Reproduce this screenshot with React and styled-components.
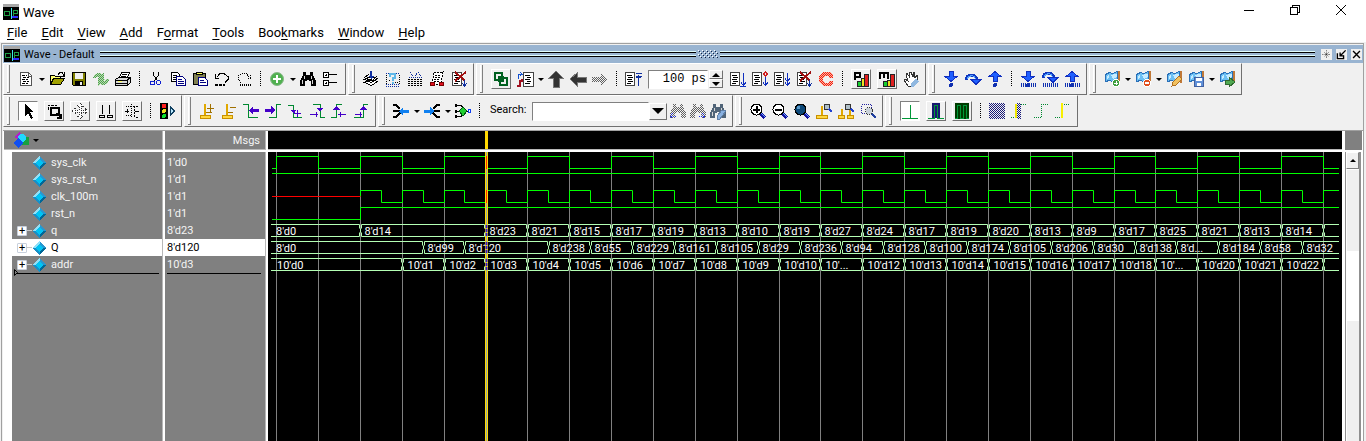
import React, { useState } from "react";
import styled, { createGlobalStyle } from "styled-components";

const GlobalStyle = createGlobalStyle`
  *, *::before, *::after {
    box-sizing: border-box;
  }
  body {
    margin: 0;
    background: #f0f0f0;
    color: #000;
    font-family: Roboto, "Liberation Sans", sans-serif;
    font-size: 11px;
  }
  button, input {
    font: inherit;
    color: inherit;
  }
`;

const MENU = [
  ["", "F", "ile"],
  ["", "E", "dit"],
  ["", "V", "iew"],
  ["", "A", "dd"],
  ["F", "o", "rmat"],
  ["", "T", "ools"],
  ["Boo", "k", "marks"],
  ["", "W", "indow"],
  ["", "H", "elp"],
];

const SIGNALS = [
  { name: "sys_clk", value: "1'd0" },
  { name: "sys_rst_n", value: "1'd1" },
  { name: "clk_100m", value: "1'd1" },
  { name: "rst_n", value: "1'd1" },
  { name: "q", value: "8'd23", bus: true },
  { name: "Q", value: "8'd120", bus: true },
  { name: "addr", value: "10'd3", bus: true },
];

// bus values as [clock edge, value]
const Q_LOW = [
  [0, "8'd0"], [2, "8'd14"], [5, "8'd23"], [6, "8'd21"], [7, "8'd15"],
  [8, "8'd17"], [9, "8'd19"], [10, "8'd13"], [11, "8'd10"], [12, "8'd19"],
  [13, "8'd27"], [14, "8'd24"], [15, "8'd17"], [16, "8'd19"], [17, "8'd20"],
  [18, "8'd13"], [19, "8'd9"], [20, "8'd17"], [21, "8'd25"], [22, "8'd21"],
  [23, "8'd13"], [24, "8'd14"], [25, ""],
];

const Q_HIGH = [
  [0, "8'd0"], [3.5, "8'd99"], [4.5, "8'd120"], [6.5, "8'd238"], [7.5, "8'd55"],
  [8.5, "8'd229"], [9.5, "8'd161"], [10.5, "8'd105"], [11.5, "8'd29"],
  [12.5, "8'd236"], [13.5, "8'd94"], [14.5, "8'd128"], [15.5, "8'd100"],
  [16.5, "8'd174"], [17.5, "8'd105"], [18.5, "8'd206"], [19.5, "8'd30"],
  [20.5, "8'd138"], [21.5, "8'd..."], [22.5, "8'd184"], [23.5, "8'd58"],
  [24.5, "8'd32"],
];

const ADDR = [[0, "10'd0"]];
for (let k = 3; k <= 24; k++) {
  ADDR.push([k, k === 13 || k === 21 ? "10'..." : `10'd${k - 2}`]);
}
ADDR.push([25, ""]);

/* ---------- icons ---------- */

const L = ({ d, c = "#000", w = 1, dash, fill = "none" }) => (
  <path d={d} stroke={c} strokeWidth={w} strokeDasharray={dash} fill={fill} />
);

const Page = ({ x = 1 }) => (
  <>
    <path d={`M${x + 0.5} 1.5h9v13h-9z`} fill="#fff" stroke="#444" />
    <L d={`M${x + 2} 4.5h5M${x + 3} 6.5h5M${x + 2} 8.5h5M${x + 3} 10.5h5M${x + 2} 12.5h4`} />
  </>
);

const Lens = ({ fill = "#fff", sign }) => (
  <>
    <path d="M10 10l5 5" stroke="#1414a0" strokeWidth="3" />
    <path d="M11 10l4 4" stroke="#6aa0ff" />
    <circle cx="6.5" cy="6.5" r="5.5" fill={fill} stroke="#000" />
    {sign}
  </>
);

const Bino = ({ dash, c = "#000" }) => (
  <>
    <path d="M3 1h3v3h4V1h3v3l3 6v5h-5v-5H9V9H7v1H5v5H0v-5l3-6z" fill={dash ? "url(#dither)" : c} />
    {!dash && <L d="M4.500 5v3M2.500 9v4M11.500 5v3M12.500 9v4" c="#d8d8d8" />}
  </>
);

const Flag = () => (
  <>
    <path d="M1.500 3.500l4-2 3 1 5-2v8l-5 2-3-1-4 1z" fill="#6cc0f4" stroke="#2a70b8" />
    <path d="M7 4l3-1 3 0v3l-4 2zM3 5l2-1v3l-2 1z" fill="#c8ecff" />
    <path d="M14.500 0v12" stroke="#c07838" strokeWidth="2" />
  </>
);

const Down = ({ c = "#2060ff" }) => <path d="M6 .5h4v5h4l-6 5-6-5h4z" fill={c} stroke="#1030c0" />;
const Up = ({ c = "#2060ff" }) => <path d="M6 10.500h4v-5h4l-6-5-6 5h4z" fill={c} stroke="#1030c0" />;
const Over = () => (
  <>
    <path d="M1 7c1-6 9-7 11 0" fill="none" stroke="#1038c0" strokeWidth="3" />
    <path d="M2 6c2-4 7-5 9 1" fill="none" stroke="#50a0ff" />
    <path d="M6 6.500h10l-5 5z" fill="#2060ff" stroke="#1030c0" />
  </>
);
const Ticks = () => <L d="M1 14h15" c="#1030b0" w="4" dash="1 1" />;

const GREEN = "#008830";
const PURPLE = "#4400c8";
const GOLD = "#c89000";

const icons = {
  app: (
    <>
      <path d="M0 0h16v16H0z" fill="#000" />
      <path d="M0 0h16v3H0z" fill="#a8a8a8" />
      <L d="M1 7.500h5v4H2M1 7.500v4" c="#20a048" />
      <L d="M10.500 12V6.500h4v3h-4" c="#20a048" />
      <L d="M8 4v11" c="#40e8e8" />
      <L d="M9 13h6" c="#3030ff" w="2" />
    </>
  ),
  newDoc: (
    <>
      <path d="M2.5 1.5h8l3 3v10h-11z" fill="#fff" stroke="#555" />
      <L d="M10.5 1v4h3" c="#555" />
      <L d="M4 4.5h5M5 6.5h6M4 8.5h6M5 10.5h6M4 12.5h6" dash="3 1" />
    </>
  ),
  open: (
    <>
      <path d="M1.5 13.5v-9h4l1 1h5v3" fill="#ffff70" stroke="#000" />
      <path d="M1.5 13.5l3-6h11l-4 6z" fill="#a0a000" stroke="#000" />
      <L d="M9 3.5l2-2h2l2 3M15 1v4h-3" />
    </>
  ),
  save: (
    <>
      <path d="M1.5 1.5h13v13h-12l-1-1z" fill="#808000" stroke="#000" />
      <path d="M4 2h8v6H4z" fill="#f0f0f0" />
      <path d="M4 10h8v5H4z" fill="#000" />
      <path d="M9 11h2v3H9z" fill="#f0f0f0" />
    </>
  ),
  reload: (
    <>
      <path d="M0 7c1-5 6-6 9-4l2-2v7H4l2-2c-2-1-3 0-3 1z" fill="#b8dcb0" />
      <path d="M16 8c-1 6-6 7-9 5l-2 2V8h7l-2 2c2 0 3-1 3-2z" fill="#b8dcb0" />
      <path d="M0 7c1-5 6-6 9-4l2-2v7H4l2-2c-2-1-3 0-3 1z" fill="url(#ditherGreen)" />
      <path d="M16 8c-1 6-6 7-9 5l-2 2V8h7l-2 2c2 0 3-1 3-2z" fill="url(#ditherGreen)" />
    </>
  ),
  print: (
    <>
      <path d="M4.5 6.5l2-5h8l-2 5z" fill="#fff" stroke="#000" />
      <path d="M.5 8.5l3-2h12v5l-3 3H.5z" fill="#d8d8d8" stroke="#000" />
      <L d="M7 3.5h5M6 5.5h5M1 9.5h11l3-3M12.5 10v4M1 12h11" />
      <path d="M3 10h4v1H3z" fill="#ffff60" />
    </>
  ),
  cut: (
    <>
      <L d="M5.5 1v3l4 6M10.5 1v3l-4 6" w="1" />
      <circle cx="4.5" cy="12" r="2" fill="none" stroke="#1020d0" />
      <circle cx="10.5" cy="11.5" r="2" fill="none" stroke="#1020d0" />
    </>
  ),
  copy: (
    <>
      <path d="M1.5 1.5h6l2 2v7h-8z" fill="#fff" stroke="#000" />
      <L d="M3 4.5h4M3 6.5h5M3 8.5h5" />
      <path d="M6.5 5.5h6l3 3v6h-9z" fill="#fff" stroke="#000080" />
      <L d="M8 8.5h4M8 10.5h6M8 12.5h6" c="#000080" />
    </>
  ),
  paste: (
    <>
      <path d="M1.5 2.5h12v11h-12z" fill="#808050" stroke="#000" />
      <path d="M4.5 3.5v-2h6v2z" fill="#ffff50" stroke="#000" />
      <path d="M6.5 6.5h6l3 3v5h-9z" fill="#fff" stroke="#000080" />
      <L d="M8 9.5h4M8 11.5h6" c="#000080" />
    </>
  ),
  undo: (
    <>
      <L d="M1.5 7V3M1 7.5h4M3 6l3-3.500h4l4 3v3l-3 3" />
      <L d="M1 14h10" dash="3 1" w="2" />
    </>
  ),
  redo: (
    <>
      <L d="M14.500 7V3M15 7.500h-4M13 6l-3-3.500H6l-4 3v3l3 3" dash="1 1" />
      <L d="M4 13.500h11" dash="1 1" w="2" />
    </>
  ),
  add: (
    <>
      <circle cx="8" cy="8" r="6.5" fill="#50b050" stroke="#88b888" shapeRendering="auto" />
      <L d="M8 4v8M4 8h8" c="#fff" w="2" />
    </>
  ),
  find: <Bino />,
  tree: (
    <>
      <path d="M1.500 1.500h5v5h-5zM1.500 9.500h5v5h-5z" fill="#fff" stroke="#000" />
      <L d="M3 4h2M4 3v2M3 12h2M4 11v2M7 3.500h8M7 11.500h8" />
    </>
  ),
  book: (
    <>
      <path d="M1.500 11.500l6-3 7 2-6 4zM1.500 8.500l6-3 7 2-6 4z" fill="#fff" stroke="#000" />
      <L d="M1 6.500l5-3M14 5l-5 5-7-3" />
      <path d="M7 0h2v5h2L8 8 5 5h2z" fill="#1030a0" />
    </>
  ),
  help: (
    <>
      <L d="M1 2.500h14M1 13.500h14M1 15.500h14" c="#1030a0" dash="1 1" />
      <L d="M1.500 4v10M14.500 4v10M4 9h2M10 11h3" dash="1 1" />
      <L d="M5 6V3h5v4H8v3M8 11v2" c="#60b8e8" w="2" />
    </>
  ),
  grid: (
    <>
      <L d="M1 8.500h15M1 10.500h15M1 12.500h15M1 14.500h15" dash="2 1" />
      <L d="M3 1l3 5M8 5l2-3M11 1l3 5M2 6h13" c="#1030a0" dash="1 1" />
    </>
  ),
  cart: (
    <>
      <path d="M5 2l9-1-2 12H3z" fill="#fff" stroke="#000" strokeDasharray="2 1" />
      <L d="M6 4h6M6 6h6M5 8h6M5 10h6" dash="2 1" />
      <circle cx="3.500" cy="13" r="2" fill="#e01020" stroke="#700" />
      <circle cx="12.500" cy="13" r="2" fill="#e01020" stroke="#700" />
    </>
  ),
  stopDoc: (
    <>
      <Page />
      <L d="M4 1l10 9M15 1L4 10" c="#a01010" w="2" />
      <L d="M13.500 9v6M11 12l2.500 3 2.500-3" c="#1030a0" />
    </>
  ),
  link: (
    <>
      <path d="M2 2h7v7H2zM7 7h7v7H7z" fill="none" stroke="#006020" strokeWidth="2" />
      <path d="M5 5h5v5H5z" fill="none" stroke="#006020" />
    </>
  ),
  restart: (
    <>
      <L d="M0 15h3v-5h2V8" c="#a01020" w="2" />
      <L d="M1.500 8V3h4M3 1l2 2-2 2" c="#1050d0" w="1" />
      <path d="M6.500 1.500h10v14h-10z" fill="#fff" stroke="#444" />
      <L d="M8 4.500h5M10 6.500h4M8 8.500h5M10 10.500h4M8 12.500h5" />
    </>
  ),
  upArrow: <path d="M8 0l7 7h-4v9H5V7H1z" fill="#333" stroke="#777" />,
  leftArrow: <path d="M0 8l7-6v4h9v5H7v4z" fill="#333" stroke="#777" />,
  rightArrow: <path d="M16 8L9 2v4H0v5h9v4z" fill="url(#dither)" />,
  runLength: (
    <>
      <Page x={0} />
      <L d="M11 2.500h6M11 5.500h6M13.500 4v11M11.500 7l2-2 2 2" c="#1030a0" />
    </>
  ),
  run: (
    <>
      <Page x={0} />
      <L d="M13.500 2v12M11 11.500l2.500 3 2.500-3M10 15.500h6" c="#1030c0" />
    </>
  ),
  runContinue: (
    <>
      <Page x={0} />
      <L d="M13.500 6v8M11 11.500l2.500 3 2.500-3" c="#1030c0" />
      <L d="M13.500 1l2 2-2 2-2-2z" c="#d02020" />
    </>
  ),
  runAll: (
    <>
      <Page x={0} />
      <L d="M13.500 2v12M11 7.500l2.500 3 2.500-3M11 11.500l2.500 3 2.500-3" c="#1030c0" />
    </>
  ),
  breakRun: (
    <>
      <path d="M5 1h7l3 3v3h-4V5H7L5 7v3l2 2h4v-2h4v2l-3 3H5l-4-4V5z" fill="#ffb0a0" />
      <path d="M5 1h7l3 3v3h-4V5H7L5 7v3l2 2h4v-2h4v2l-3 3H5l-4-4V5z" fill="url(#ditherRed)" />
    </>
  ),
  profile: (
    <>
      <path d="M4.500 10.500h4v5h-4z" fill="#18d030" stroke="#222" />
      <path d="M8.500 7.500h3v8h-3z" fill="#f0e020" stroke="#222" />
      <path d="M11.500 3.500h4v12h-4z" fill="#e02020" stroke="#222" />
      <L d="M2 9V2h5v4H2" w="2" />
    </>
  ),
  memory: (
    <>
      <path d="M4.500 10.500h4v5h-4z" fill="#18d030" stroke="#222" />
      <path d="M8.500 9.500h3v6h-3z" fill="#f0e020" stroke="#222" />
      <path d="M11.500 3.500h4v12h-4z" fill="#e02020" stroke="#222" />
      <L d="M1 8V2h8v6M5 2v5" w="2" />
    </>
  ),
  hand: (
    <>
      <path
        d="M5 15l-4-6 1-1 3 2-2-7 1-1 3 5-1-6h2l2 5V1h1l1 6 2-3 1 1-1 6-3 4z"
        fill="#fff"
        stroke="#333"
      />
      <path d="M8 12l5-4 3 2-5 6H8z" fill="#90b8e0" />
    </>
  ),
  stepInto: (
    <>
      <Down />
      <circle cx="8" cy="14" r="2" fill="#1030b0" />
    </>
  ),
  stepOver: (
    <g transform="translate(0 2)">
      <Over />
    </g>
  ),
  stepOut: (
    <>
      <Up />
      <circle cx="8" cy="14" r="2" fill="#1030b0" />
    </>
  ),
  stepIntoCur: (
    <>
      <Ticks />
      <Down />
      <circle cx="8" cy="14" r="2" fill="#1030b0" />
    </>
  ),
  stepOverCur: (
    <>
      <Ticks />
      <Over />
    </>
  ),
  stepOutCur: (
    <>
      <Ticks />
      <Up />
      <circle cx="8" cy="14" r="2" fill="#1030b0" />
    </>
  ),
  flagAdd: (
    <>
      <Flag />
      <circle cx="12" cy="12" r="3.500" fill="#40a040" stroke="#fff" />
      <L d="M12 10v4M10 12h4" c="#fff" />
    </>
  ),
  flagRemove: (
    <>
      <Flag />
      <circle cx="12" cy="12" r="3.500" fill="#e05020" stroke="#fff" />
      <L d="M10 12h4" c="#fff" w="2" />
    </>
  ),
  flagEdit: (
    <>
      <Flag />
      <path d="M6 15l1-4 6-6 3 3-6 6z" fill="#f0c060" stroke="#b07020" />
    </>
  ),
  flagSave: (
    <>
      <Flag />
      <path d="M6.500 6.500h9v9h-9z" fill="#6090d8" stroke="#4060a0" />
      <path d="M8 7h6v3H8zM9 12h4v3H9z" fill="#fff" />
    </>
  ),
  flagGo: (
    <>
      <Flag />
      <path d="M6 9h4V6l6 5-6 5v-3H6z" fill="#50a850" stroke="#306830" />
    </>
  ),
  pointer: <path d="M5 1v12l3-3 3 6 2-1-3-6h4z" fill="#000" />,
  zoomMode: (
    <>
      <L d="M2 7V2h9" dash="3 1" />
      <path d="M5 5h8v7H5z" fill="none" stroke="#000" strokeWidth="2" />
      <L d="M11 10l4 5M15 11v4h-4" w="2" />
    </>
  ),
  pan: (
    <path
      d="M8 0l3 3H9v4h4V5l3 3-3 3V9H9v4h2l-3 3-3-3h2V9H3v2L0 8l3-3v2h4V3H5z"
      fill="#fff"
      stroke="#333"
      strokeDasharray="1 1"
    />
  ),
  measure: <L d="M4.500 2v9M11.500 2v9M1.500 12.500h5v2h-5zM9.500 12.500h5v2h-5z" />,
  edit: (
    <>
      <L d="M7.500 1v14M7 3.500h-5M2 12.500h5" dash="1 1" />
      <L d="M1 8h4M3 6v4M11 8h4" />
      <L d="M9 3.500h6M10.500 3v11h4" dash="2 1" />
    </>
  ),
  traffic: (
    <>
      <path d="M1 0h8v16H1z" fill="#000" />
      <circle cx="5" cy="3" r="2.500" fill="#ff2020" />
      <circle cx="5" cy="8" r="2" fill="#f0e020" />
      <circle cx="5" cy="13" r="2" fill="#10e030" />
      <L d="M11.500 4v8l4-4z" fill="#b8e8ff" c="#104060" />
    </>
  ),
  cursorAdd: (
    <>
      <path d="M1.500 12.500h10v3h-10z" fill="#ffd840" stroke={GOLD} />
      <L d="M6 1v11" c="#e0a800" w="2" />
      <L d="M11.500 1v8M8 5.500h7M7 9.500h6" c="#a07000" />
    </>
  ),
  cursorDel: (
    <>
      <path d="M1.500 12.500h10v3h-10z" fill="#ffd840" stroke={GOLD} />
      <L d="M6 1v11" c="#e0a800" w="2" />
      <L d="M9 4.500h6M7 9.500h5" c="#a07000" />
    </>
  ),
  prevEdge: (
    <>
      <L d="M0 1.500h5v13h10" c={GREEN} />
      <path d="M6 7l4-4v3h6v3h-6v3z" fill={PURPLE} />
    </>
  ),
  nextEdge: (
    <>
      <L d="M4 14.500h7v-13h5" c={GREEN} />
      <path d="M10 7L6 3v3H0v3h6v3z" fill={PURPLE} />
    </>
  ),
  prevFall: (
    <>
      <L d="M1 2.500h5v12h9" c={GREEN} />
      <L d="M7 10.500h7M10 7v7" c={PURPLE} />
      <path d="M4 7h5l-2 4z" fill={PURPLE} />
    </>
  ),
  nextFall: (
    <>
      <L d="M4 1.500h7v13h5" c={GREEN} />
      <L d="M1 11.500h8M7 9v5" c={PURPLE} />
      <path d="M8 5h6l-3 4z" fill={PURPLE} />
    </>
  ),
  prevRise: (
    <>
      <L d="M0 14.500h5v-13h6" c={GREEN} />
      <L d="M7 11.500h8M9 9v5" c={PURPLE} />
      <path d="M2 7h7L5 3z" fill={PURPLE} />
    </>
  ),
  nextRise: (
    <>
      <L d="M1 14.500h9v-13h5" c={GREEN} />
      <L d="M2 11.500h7M7 9v5" c={PURPLE} />
      <path d="M7 7h7l-4-4z" fill={PURPLE} />
    </>
  ),
  merge: (
    <>
      <L d="M0 2h3l4 4M0 8h7M0 14h3l4-4" w="2" />
      <path d="M6 8l4-4v3h6v3h-6v3z" fill="#1080f0" />
    </>
  ),
  split: (
    <>
      <L d="M16 2h-3L9 6M16 8H9M16 14h-3l-4-4" w="2" />
      <path d="M10 8L6 4v3H0v3h6v3z" fill="#1080f0" />
    </>
  ),
  trace: (
    <>
      <L d="M1 2.500h5l4 4M1 8.500h4M1 13.500h5l3-4M10 8.500h3" w="1" />
      <L d="M0 2.500h2M0 8.500h2M0 13.500h2" w="3" />
      <path d="M8 4l4 4-4 5-4-5z" fill="#20d030" stroke="#005010" />
      <path d="M13.500 6.500h2v3h-2z" fill="#fff" stroke="#1040f0" />
    </>
  ),
  findPrev: (
    <>
      <Bino dash />
      <L d="M6 13.500H1M3 10l-3 3 3 3" c="#2030e0" dash="1 1" />
    </>
  ),
  findNext: (
    <>
      <Bino dash />
      <L d="M9 13.500h6M12 10l3 3-3 3" c="#2030e0" dash="1 1" />
    </>
  ),
  findOptions: (
    <>
      <Bino c="#506478" />
      <path d="M7 13l5-6 4 1-6 8-3 0z" fill="#88b0e0" stroke="#6080a8" />
    </>
  ),
  zoomIn: <Lens sign={<L d="M6.500 3v7M3 6.500h7" w="2" />} />,
  zoomOut: <Lens sign={<L d="M3 6.500h7" w="2" />} />,
  zoomFull: <Lens fill="#0c4878" sign={<path d="M3 3h3v3H3z" fill="#5898c8" />} />,
  zoomCursor: (
    <>
      <path d="M.5 12.500h11v3H.5z" fill="#ffd840" stroke={GOLD} />
      <L d="M6 3v9" c="#e0a800" w="2" />
      <circle cx="11" cy="4" r="3" fill="#b0c0c8" stroke="#333" />
      <L d="M13 6l3 3" c="#2040d0" w="2" />
    </>
  ),
  zoomCursors: (
    <>
      <path d="M.5 12.500h6v3h-6zM9.500 12.500h6v3h-6z" fill="#ffd840" stroke={GOLD} />
      <L d="M4 6v6M12 6v6" c="#e0a800" w="2" />
      <circle cx="10" cy="4" r="3" fill="#b0c0c8" stroke="#333" />
      <L d="M13 6l3 3" c="#2040d0" w="2" />
    </>
  ),
  zoomArea: (
    <>
      <L d="M1.500 1.500h10v9h-10z" c="#2020a0" dash="1 1" />
      <circle cx="9" cy="8" r="3.500" fill="#c8d0d8" stroke="#333" strokeDasharray="1 1" />
      <L d="M12 11l4 4" c="#2040a0" w="2" />
    </>
  ),
  levelOne: <L d="M0 15.500h16M8.500 2v13" c="#009838" />,
  levelTwo: (
    <>
      <path d="M4 0h8v15H4z" fill="#181870" />
      <L d="M0 15.500h6.500v-13h3v13H16" c="#009838" />
    </>
  ),
  levelThree: (
    <>
      <path d="M1 0h14v16H1z" fill="#003c00" />
      <L d="M1 15.500h2.500v-13h3v13h3v-13h3v13H15" c="#009838" />
    </>
  ),
  ditherWave: <path d="M0 0h16v16H0z" fill="url(#ditherBlue)" />,
  ditherEdge: (
    <>
      <path d="M6 0h4v16H6z" fill="url(#ditherBlue)" />
      <L d="M5 1v14" c="#f0e800" w="2" />
      <L d="M0 14.500h4M10 1.500h5" c={GREEN} dash="1 1" />
    </>
  ),
  dotEdge: <L d="M1 14.500h7.500v-13h7" c={GREEN} dash="1 1" />,
  yellowEdge: (
    <>
      <L d="M0 14.500h6M9 1.500h6" c={GREEN} dash="1 1" />
      <L d="M7 0v15" c="#f8f000" w="2" />
    </>
  ),
  objects: (
    <>
      <path d="M6 0l6 4-4 5-7-4z" fill="#b020c8" />
      <path d="M9 5h7v8H9z" fill="#18a040" />
      <circle cx="9" cy="6" r="4" fill="#20d8ff" />
      <path d="M5 6l5 5-5 5-5-5z" fill="#1050f0" />
    </>
  ),
  signal: (
    <>
      <path d="M7.500 1l-7 7h7z" fill="#90e0f8" />
      <path d="M7.500 1l7 7h-7z" fill="#2898d0" />
      <path d="M.5 8l7 7V8z" fill="#1890c8" />
      <path d="M14.500 8l-7 7V8z" fill="#006898" />
      <path d="M7.500 4l4 4-4 4-4-4z" fill="#00c4f4" />
    </>
  ),
  minimize: <L d="M3 8.500h10" />,
  restore: (
    <>
      <L d="M3.500 5.500h7v7h-7z" />
      <L d="M5.500 5V3.500h7v7H11" />
    </>
  ),
  close: <path d="M3 3l10 10M13 3L3 13" stroke="#000" shapeRendering="auto" />,
  dockMove: <L d="M8 2v12M2 8h12M5 5l6 6M11 5l-6 6" dash="1 1" />,
  dockOut: (
    <>
      <L d="M2 6v8h9V9" w="2" />
      <L d="M14 2L7 9M6 5v5h5" w="2" />
    </>
  ),
  dockClose: <L d="M3 3l10 10M13 3L3 13" w="2" />,
};

const Icon = ({ name }) => (
  <Glyph viewBox="0 0 16 16" aria-hidden="true">
    {icons[name]}
  </Glyph>
);

// checker fills used by the disabled icons
const Patterns = () => (
  <PatternDefs aria-hidden="true">
    {[
      ["dither", "#606060"],
      ["ditherGreen", "#50a050"],
      ["ditherRed", "#f02010"],
      ["ditherBlue", "#181878"],
    ].map(([id, color]) => (
      <pattern key={id} id={id} width="2" height="2" patternUnits="userSpaceOnUse">
        <path d="M0 0h1v1H0zM1 1h1v1H1z" fill={color} />
      </pattern>
    ))}
  </PatternDefs>
);

/* ---------- toolbars ---------- */

// "|" is a separator, "v" a caret, "+name" a raised button, "-name" a pressed one
const Tools = ({ items }) =>
  items.split(" ").map((item, i) => {
    if (item === "|") return <Separator key={i} />;
    if (item === "v") return <Caret key={i} aria-label="More" />;
    if (item[0] === "+" || item[0] === "-") {
      return (
        <FramedButton key={i} $pressed={item[0] === "-"} aria-label={item.slice(1)}>
          <Icon name={item.slice(1)} />
        </FramedButton>
      );
    }
    return (
      <ToolButton key={i} aria-label={item}>
        <Icon name={item} />
      </ToolButton>
    );
  });

/* ---------- waveform ---------- */

const edge = (k) => Math.round(8 + k * 41.88) + 0.5;
const END = 1071;

const clockPath = (high, low, from, step) => {
  let d = "";
  let up = true;
  for (let k = from; k <= 25; k += step) {
    d += up ? `V${high}` : `V${low}`;
    d += `H${k + step > 25 ? END : edge(k + step)}`;
    up = !up;
  }
  return d;
};

const Bus = ({ values, top }) => {
  const bottom = top + 12;
  const mid = top + 6;
  return (
    <g fill="none" stroke="#b4ffb4">
      {values.map(([k, text], i) => {
        const start = i === 0 ? 3 : edge(k) + 1;
        const end = i === values.length - 1 ? END : edge(values[i + 1][0]) - 1;
        const wide = text.startsWith("10");
        return (
          <g key={k}>
            <path d={`M${start} ${top}H${end}M${start} ${bottom}H${end}`} />
            {i > 0 && (
              <path
                d={`M${start} ${top}v4M${start} ${bottom}v-4M${start - 2} ${top}v4M${start - 2} ${bottom}v-4M${start - 1} ${mid - 2}v4`}
              />
            )}
            <WaveText x={i === 0 ? (wide ? 9 : 8) : start + (wide ? 4 : 3)} y={top + 10}>
              {text}
            </WaveText>
          </g>
        );
      })}
    </g>
  );
};

const Wave = () => (
  <WaveSvg role="img" aria-label="Waveform">
    {Array.from({ length: 26 }, (_, k) => (
      <line key={k} x1={edge(k)} x2={edge(k)} y1="0" y2="100%" stroke="#808080" />
    ))}
    <g fill="none" stroke="#00ff00">
      <path d={`M4 16.5H${edge(0)}${clockPath(4.5, 16.5, 0, 1)}`} />
      <path d={`M4 21.5H${END}`} />
      <path d={`M${edge(2)} 44.5${clockPath(38.5, 50.5, 2, 0.5)}`} />
      <path d={`M4 67.5H${edge(2)}V55.5H${END}`} />
      <path d={`M4 44.5H${edge(2)}`} stroke="#ff0000" />
    </g>
    <Bus values={Q_LOW} top={72.5} />
    <Bus values={Q_HIGH} top={89.5} />
    <Bus values={ADDR} top={106.5} />
    <rect x="217" y="0" width="3" height="100%" fill="#ffd800" />
    <line x1="218.5" x2="218.5" y1="0" y2="100%" stroke="#90a8a8" />
    <path d="M218.500 4v13M218.500 38v13" stroke="#ff3000" />
    <path
      d="M218.500 73v12M218.500 90v12M218.500 107v12"
      stroke="#3018c8"
      strokeWidth="2"
      strokeDasharray="3 1"
    />
  </WaveSvg>
);

export default function App() {
  const [step, setStep] = useState("100 ps");
  const [query, setQuery] = useState("");

  return (
    <Shell>
      <GlobalStyle />
      <Patterns />
      <TitleBar>
        <Icon name="app" />
        <Title>Wave</Title>
        <WindowButton aria-label="Minimize"><Icon name="minimize" /></WindowButton>
        <WindowButton aria-label="Restore"><Icon name="restore" /></WindowButton>
        <WindowButton aria-label="Close"><Icon name="close" /></WindowButton>
      </TitleBar>
      <MenuBar>
        {MENU.map(([before, key, after]) => (
          <MenuItem key={before + key + after}>
            {before}
            <u>{key}</u>
            {after}
          </MenuItem>
        ))}
      </MenuBar>

      <Frame>
        <PaneTitle>
          <Icon name="app" />
          <span>Wave - Default</span>
          <Rails />
          <Grip viewBox="0 0 20 8" aria-hidden="true">
            <path d="M0 .5h18M0 4.500h18M2 2.500h18M2 6.500h18" stroke="#fff" strokeDasharray="1 3" />
            <path d="M1 1.500h18M1 5.500h18M3 3.500h17M3 7.500h17" stroke="#102040" strokeDasharray="1 3" />
          </Grip>
          <Rails />
          <DockButton aria-label="Move"><Icon name="dockMove" /></DockButton>
          <DockButton aria-label="Undock"><Icon name="dockOut" /></DockButton>
          <DockButton aria-label="Close pane"><Icon name="dockClose" /></DockButton>
        </PaneTitle>

        <ToolRow>
          <ToolGroup $end={5}>
            <Tools items="newDoc v open save reload print | cut copy paste undo redo | add v find tree" />
          </ToolGroup>
          <ToolGroup>
            <Tools items="book help grid cart stopDoc" />
          </ToolGroup>
          <ToolGroup>
            <Tools items="+link restart v upArrow leftArrow rightArrow | runLength" />
            <StepInput
              aria-label="Run length"
              value={step}
              onChange={(e) => setStep(e.target.value)}
            />
            <Spinner>
              <SpinButton $up aria-label="Increase" />
              <SpinButton aria-label="Decrease" />
            </Spinner>
            <Tools items="run runContinue runAll stopDoc breakRun | +profile +memory hand" />
          </ToolGroup>
          <ToolGroup>
            <Tools items="stepInto stepOver stepOut | stepIntoCur stepOverCur stepOutCur" />
          </ToolGroup>
          <ToolGroup>
            <Tools items="flagAdd v flagRemove v flagEdit flagSave v flagGo" />
          </ToolGroup>
        </ToolRow>
        <ToolRow>
          <ToolGroup>
            <Tools items="-pointer +zoomMode +pan +measure +edit | traffic" />
          </ToolGroup>
          <ToolGroup>
            <Tools items="cursorAdd cursorDel prevEdge nextEdge prevFall nextFall prevRise nextRise" />
          </ToolGroup>
          <ToolGroup $end={5}>
            <Tools items="merge v split v trace |" />
            <SearchLabel htmlFor="search">Search:</SearchLabel>
            <SearchInput
              id="search"
              value={query}
              onChange={(e) => setQuery(e.target.value)}
            />
            <DropButton aria-label="Search history" />
            <Tools items="findPrev findNext findOptions" />
          </ToolGroup>
          <ToolGroup>
            <Tools items="zoomIn zoomOut zoomFull zoomCursor zoomCursors zoomArea" />
          </ToolGroup>
          <ToolGroup>
            <Tools items="-levelOne +levelTwo +levelThree | ditherWave ditherEdge dotEdge yellowEdge" />
          </ToolGroup>
        </ToolRow>

        <Panes>
          <Column $width={159}>
            <ColumnHead>
              <Icon name="objects" />
              <Caret aria-label="Columns" />
            </ColumnHead>
            <ColumnBody $indent>
              {SIGNALS.map((s) => (
                <Row key={s.name} $selected={s.name === "Q"}>
                  {s.bus ? <Expander aria-label={`Expand ${s.name}`}>+</Expander> : <Leaf />}
                  <Icon name="signal" />
                  <RowName>{s.name}</RowName>
                </Row>
              ))}
              <InsertLine viewBox="0 0 147 8" aria-hidden="true">
                <path d="M2.500 .5l3 3-3 3zM5 4.500h142" fill="none" stroke="#000" />
              </InsertLine>
            </ColumnBody>
          </Column>
          <Column $width={101}>
            <ColumnHead $right>Msgs</ColumnHead>
            <ColumnBody>
              {SIGNALS.map((s) => (
                <Row key={s.name} $selected={s.name === "Q"}>
                  <RowValue>{s.value}</RowValue>
                </Row>
              ))}
              <InsertRule />
            </ColumnBody>
          </Column>
          <WaveColumn>
            <TimeHead>
              <CursorMark />
            </TimeHead>
            <Wave />
          </WaveColumn>
          <ScrollColumn>
            <ScrollHead />
            <Track>
              <ScrollButton aria-label="Scroll up" />
              <Thumb />
              <TrackGap />
              <TrackRest />
            </Track>
          </ScrollColumn>
        </Panes>
      </Frame>
    </Shell>
  );
}

const Glyph = styled.svg`
  display: block;
  flex: none;
  width: 16px;
  height: 16px;
  overflow: visible;
  shape-rendering: crispEdges;
`;

const PatternDefs = styled.svg`
  position: absolute;
  width: 0;
  height: 0;
`;

const Shell = styled.div`
  display: flex;
  flex-direction: column;
  min-height: 100vh;
  overflow: hidden;
`;

const TitleBar = styled.header`
  display: flex;
  align-items: center;
  height: 24px;
  padding: 0 2px 0 3px;
  background: #fff;
`;

const Title = styled.h1`
  flex: 1;
  margin: 0 0 0 4px;
  font-size: 13px;
  font-weight: 400;
`;

const WindowButton = styled.button`
  display: flex;
  align-items: center;
  justify-content: center;
  width: 46px;
  height: 20px;
  margin-bottom: 4px;
  padding: 0;
  border: 0;
  background: none;
`;

const MenuBar = styled.nav`
  display: flex;
  gap: 14px;
  height: 18px;
  padding: 0 7px;
  background: #fff;
`;

const MenuItem = styled.button`
  padding: 0;
  border: 0;
  background: none;
  font-size: 13px;
  line-height: 18px;

  u {
    text-underline-offset: 2px;
  }
`;

const Frame = styled.main`
  display: flex;
  flex: 1;
  flex-direction: column;
  margin: 1px 2px 0 1px;
  padding: 1px 0 0 1px;
  border: solid #a0a0a0;
  border-width: 1px 1px 0;
  background: #f0f0f0;
`;

const PaneTitle = styled.div`
  display: flex;
  align-items: center;
  gap: 4px;
  height: 18px;
  padding: 0 1px;
  background: #99b4d1;
`;

const Rails = styled.div`
  flex: 1;
  height: 6px;
  margin: 0 2px;
  background: linear-gradient(
    #e0ffff 1px, #000 1px, #000 2px, #99b4d1 2px, #99b4d1 4px,
    #e0ffff 4px, #e0ffff 5px, #000 5px
  );
`;

const Grip = styled.svg`
  flex: none;
  width: 20px;
  height: 8px;
  margin: 0 -4px;
  shape-rendering: crispEdges;
`;

const DockButton = styled.button`
  display: flex;
  flex: none;
  align-items: center;
  justify-content: center;
  width: 11px;
  height: 11px;
  padding: 0;
  border: 0;
  background: #f0f0f0;

  svg {
    width: 11px;
    height: 11px;
    shape-rendering: auto;
  }
`;

const ToolRow = styled.div`
  display: flex;
  gap: 2px;
`;

const ToolGroup = styled.div.attrs({ role: "toolbar" })`
  display: flex;
  flex: none;
  align-items: center;
  height: 32px;
  padding-right: ${(p) => (p.$end || 4) - 1}px;
  border: 1px solid;
  border-color: #fff #707070 #707070 #fff;

  &::before {
    content: "";
    width: 3px;
    height: 28px;
    margin: 0 5px 0 3px;
    border: solid #808080;
    border-width: 0 1px 1px 0;
    background: linear-gradient(90deg, #fff 1px, #f0f0f0 1px);
  }
`;

const ToolButton = styled.button`
  display: flex;
  flex: none;
  align-items: center;
  justify-content: center;
  width: 22px;
  height: 22px;
  padding: 0;
  border: 0;
  background: none;
`;

const FramedButton = styled(ToolButton)`
  width: 20px;
  height: 20px;
  margin: 0 3px;
  border: 1px solid;
  border-color: ${(p) => (p.$pressed ? "#808080 #fff #fff #808080" : "#fff #707070 #707070 #fff")};
  background: ${(p) => (p.$pressed ? "#fff" : "#f0f0f0")};
`;

const Separator = styled.div`
  flex: none;
  width: 1px;
  height: 16px;
  margin: 0 5px;
  background: repeating-linear-gradient(#000 0 1px, transparent 1px 2px);
`;

const Caret = styled.button`
  flex: none;
  width: 9px;
  height: 16px;
  padding: 0;
  border: 0;
  background: none;

  &::after {
    content: "";
    display: block;
    margin: 0 auto;
    width: 6px;
    border: solid transparent;
    border-width: 3px 3px 0;
    border-top-color: #000;
  }
`;

const StepInput = styled.input`
  width: 60px;
  height: 19px;
  margin-left: 4px;
  padding: 0 1px;
  border: 1px solid;
  border-color: #808080 #fff #fff #808080;
  background: #fff;
  font-family: "Liberation Mono", monospace;
  font-size: 12px;
  text-align: right;
`;

const Spinner = styled.div`
  display: flex;
  flex-direction: column;
  width: 14px;
  margin: 0 4px 0 1px;
`;

const SpinButton = styled.button`
  display: flex;
  align-items: center;
  justify-content: center;
  height: 9px;
  padding: 0;
  border: 1px solid;
  border-color: #fff #707070 #707070 #fff;
  background: #f0f0f0;

  &::after {
    content: "";
    border: solid transparent;
    border-width: ${(p) => (p.$up ? "0 4px 4px" : "4px 4px 0")};
    border-${(p) => (p.$up ? "bottom" : "top")}-color: #000;
  }
`;

const SearchLabel = styled.label`
  margin: 0 6px 0 5px;
  padding-bottom: 3px;
`;

const SearchInput = styled.input`
  width: 117px;
  height: 19px;
  padding: 0 3px;
  border: 1px solid;
  border-color: #808080 #fff #fff #808080;
  background: #fff;
`;

const DropButton = styled.button`
  width: 18px;
  height: 17px;
  margin-right: 1px;
  padding: 0;
  border: 1px solid;
  border-color: #fff #707070 #707070 #fff;
  background: #f0f0f0;

  &::after {
    content: "";
    display: block;
    width: 12px;
    margin: 0 auto;
    border: solid transparent;
    border-width: 6px 6px 0;
    border-top-color: #000;
  }

  & ~ button {
    width: 20px;
  }
`;

const Panes = styled.section`
  display: flex;
  flex: 1;
  gap: 2px;
  margin-top: 3px;
  border-top: 1px solid #a0a0a0;
  padding-left: 1px;
  background: #fff;
`;

const Column = styled.div`
  display: flex;
  flex: none;
  flex-direction: column;
  width: ${(p) => p.$width}px;
  min-width: 0;
`;

const ColumnHead = styled.div`
  display: flex;
  align-items: center;
  justify-content: ${(p) => (p.$right ? "flex-end" : "flex-start")};
  gap: 2px;
  height: 19px;
  margin-bottom: 2px;
  padding: 0 5px 0 9px;
  border: solid #b8b8b8;
  border-width: 0 1px 1px 0;
  background: #808080;
  color: #f4f4f4;
`;

const ColumnBody = styled.div`
  flex: 1;
  margin-left: ${(p) => (p.$indent ? 8 : 0)}px;
  padding-top: 2px;
  border-right: 1px solid #b8b8b8;
  background: #808080;
  color: #f4f4f4;
`;

const Row = styled.div`
  display: flex;
  align-items: center;
  height: 17px;
  background: ${(p) => (p.$selected ? "#fff" : "transparent")};
  color: ${(p) => (p.$selected ? "#000" : "inherit")};
`;

const RowName = styled.span`
  margin-left: 3px;
`;

const RowValue = styled.span`
  margin-left: 2px;
`;

const Leaf = styled.span`
  width: 20px;
`;

const Expander = styled.button`
  display: flex;
  position: relative;
  align-items: center;
  justify-content: center;
  width: 10px;
  height: 10px;
  margin: 0 5px;
  padding: 0;
  border: 1px solid #c8d0dc;
  border-radius: 1px;
  background: #fff;
  color: #000;
  line-height: 8px;

  &::after {
    content: "";
    position: absolute;
    left: 100%;
    width: 6px;
    border-top: 1px solid #c8c8c8;
  }
`;

const InsertLine = styled.svg`
  display: block;
  width: 147px;
  height: 8px;
  margin-top: -4px;
`;

const InsertRule = styled.div`
  margin: 0 4px 0 2px;
  border-top: 1px solid #000;
`;

const WaveColumn = styled.div`
  display: flex;
  flex: 1;
  flex-direction: column;
  min-width: 0;
`;

const TimeHead = styled.div`
  height: 19px;
  margin-bottom: 2px;
  border-bottom: 1px solid #b8b8b8;
  background: #000;
`;

const CursorMark = styled.div`
  width: 3px;
  height: 18px;
  margin-left: 217px;
  background: #ffd800;
`;

const WaveSvg = styled.svg`
  display: block;
  flex: 1;
  width: 100%;
  min-height: 289px;
  background: #000;
`;

const WaveText = styled.text`
  fill: #fff;
  stroke: none;
  font-size: 11px;
`;

const ScrollColumn = styled.div`
  display: flex;
  flex: none;
  flex-direction: column;
  width: 19px;
`;

const ScrollHead = styled.div`
  height: 19px;
  margin: 0 1px 2px;
  background: #808080;
`;

const Track = styled.div`
  display: flex;
  flex: 1;
  flex-direction: column;
  margin: 0 2px 0 1px;
  border: solid #909090;
  border-width: 0 2px 0 1px;
  background: #fff;
`;

const ScrollButton = styled.button`
  display: flex;
  align-items: center;
  justify-content: center;
  height: 17px;
  margin-bottom: 1px;
  padding: 0;
  border: 1px solid;
  border-color: #fff #808080 #808080 #fff;
  background: #f0f0f0;

  &::after {
    content: "";
    border: solid transparent;
    border-width: 0 3px 3px;
    border-bottom-color: #000;
  }
`;

const Thumb = styled.div`
  height: 81px;
  margin-left: 1px;
  background: #f0f0f0;
`;

const TrackGap = styled.div`
  height: 70px;
`;

const TrackRest = styled.div`
  flex: 1;
  margin-left: 1px;
  background: #f0f0f0;
`;
